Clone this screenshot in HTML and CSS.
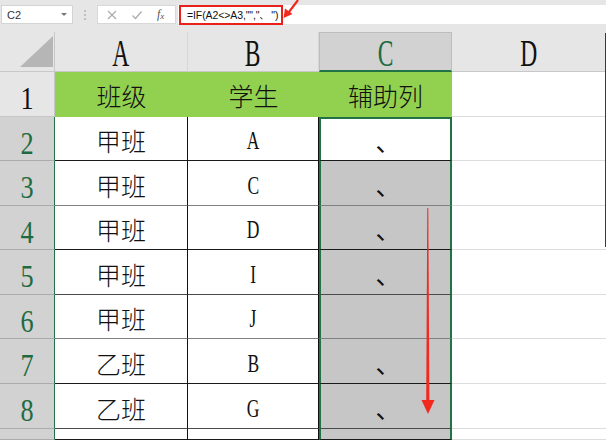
FILE: index.html
```html
<!DOCTYPE html>
<html>
<head>
<meta charset="utf-8">
<link rel="stylesheet" href="styles.css">
</head>
<body>
<div class="app">
  <div class="toolbar">
    <div class="namebox"><span>C2</span><span class="caret"></span></div>
    <div class="grip"><i></i><i></i><i></i></div>
    <div class="fxbox">
      <svg class="ico" width="12" height="12" viewBox="0 0 12 12"><path d="M2 2 L10 10 M10 2 L2 10" stroke="#ababab" stroke-width="1.2" fill="none"/></svg>
      <svg class="ico" width="12" height="12" viewBox="0 0 12 12"><path d="M1.5 6.5 L4.5 9.5 L10.5 2.5" stroke="#ababab" stroke-width="1.2" fill="none"/></svg>
      <span class="fx"><i>f</i><span class="sub">x</span></span>
    </div>
    <div class="formula"><span class="ftext">=IF(A2&lt;&gt;A3,"","<span class="dun">、</span>")</span></div>
  </div>
  <div class="sheet">
    <div class="row">
      <div class="corner"><div class="tri"></div></div>
      <div class="ch"><span>A</span></div>
      <div class="ch"><span>B</span></div>
      <div class="ch active"><span>C</span></div>
      <div class="ch last"><span>D</span></div>
    </div>
    <div class="row">
      <div class="rh"><span>1</span></div>
      <div class="head">班级</div>
      <div class="head">学生</div>
      <div class="head">辅助列</div>
      <div class="dc"></div>
    </div>
    <div class="row">
      <div class="rh sel"><span>2</span></div>
      <div class="cell">甲班</div>
      <div class="cell lat"><span>A</span></div>
      <div class="cc first">、</div>
      <div class="dc"></div>
    </div>
    <div class="row gray">
      <div class="rh sel"><span>3</span></div>
      <div class="cell">甲班</div>
      <div class="cell lat"><span>C</span></div>
      <div class="cc">、</div>
      <div class="dc"></div>
    </div>
    <div class="row">
      <div class="rh sel"><span>4</span></div>
      <div class="cell">甲班</div>
      <div class="cell lat"><span>D</span></div>
      <div class="cc">、</div>
      <div class="dc"></div>
    </div>
    <div class="row dark">
      <div class="rh sel"><span>5</span></div>
      <div class="cell">甲班</div>
      <div class="cell lat"><span>I</span></div>
      <div class="cc">、</div>
      <div class="dc"></div>
    </div>
    <div class="row gray">
      <div class="rh sel"><span>6</span></div>
      <div class="cell">甲班</div>
      <div class="cell lat"><span>J</span></div>
      <div class="cc"></div>
      <div class="dc"></div>
    </div>
    <div class="row">
      <div class="rh sel"><span>7</span></div>
      <div class="cell">乙班</div>
      <div class="cell lat"><span>B</span></div>
      <div class="cc">、</div>
      <div class="dc"></div>
    </div>
    <div class="row dark">
      <div class="rh sel"><span>8</span></div>
      <div class="cell">乙班</div>
      <div class="cell lat"><span>G</span></div>
      <div class="cc">、</div>
      <div class="dc"></div>
    </div>
    <div class="row">
      <div class="rh sel"></div>
      <div class="cell"></div>
      <div class="cell"></div>
      <div class="cc"></div>
      <div class="dc"></div>
    </div>
  </div>
  <div class="edge"></div>
  <svg class="arrows" width="606" height="440" viewBox="0 0 606 440">
    <polygon points="427.3,208 428.3,208 429.4,402 426.2,402" fill="#f2291f"/>
    <polygon points="421.5,400 434.5,400 428,414" fill="#f2291f"/>
    <line x1="298" y1="0" x2="289" y2="12" stroke="#f2291f" stroke-width="2.2"/>
    <polygon points="283.5,18 285,8.5 292.5,14" fill="#f2291f"/>
  </svg>
</div>
</body>
</html>
```

FILE: styles.css
```css
body {
  margin: 0;
  background: #e6e6e6;
}

.app {
  position: relative;
  width: 606px;
  height: 440px;
  overflow: hidden;
  background: #e6e6e6;
  font-family: "Liberation Sans", Arial, sans-serif;
}

/* ---------- toolbar ---------- */
.toolbar {
  height: 32px;
  box-sizing: border-box;
  padding-top: 5px;
  display: flex;
  align-items: flex-start;
}

.namebox {
  margin-left: 1px;
  width: 72px;
  height: 19px;
  box-sizing: border-box;
  background: #fff;
  border: 1px solid #d4d4d4;
  display: flex;
  align-items: center;
  padding: 0 5px 0 5px;
  font-size: 11px;
  color: #333;
}

.caret {
  margin-left: auto;
  width: 0;
  height: 0;
  border-left: 3px solid transparent;
  border-right: 3px solid transparent;
  border-top: 3px solid #777;
}

.grip {
  width: 24px;
  height: 19px;
  box-sizing: border-box;
  padding-top: 5px;
  display: flex;
  flex-direction: column;
  align-items: center;
  gap: 2px;
}

.grip i {
  display: block;
  width: 2px;
  height: 2px;
  background: #c0c0c0;
}

.fxbox {
  width: 79px;
  height: 19px;
  box-sizing: border-box;
  background: #fff;
  border: 1px solid #d8d8d8;
  display: flex;
  align-items: center;
  padding-left: 8px;
  gap: 13px;
}

.fx {
  font-family: "Liberation Serif", serif;
  font-size: 12px;
  color: #555;
  margin-left: 1px;
}

.fx i {
  font-style: italic;
}

.fx .sub {
  font-style: italic;
  font-size: 9px;
  position: relative;
  top: 1px;
}

.formula {
  margin-left: 2px;
  flex: 1;
  height: 19px;
  background: #fff;
}

.ftext {
  display: inline-block;
  box-sizing: border-box;
  margin-left: 1px;
  width: 104px;
  height: 20px;
  border: 2px solid #e8221b;
  padding-left: 6px;
  font-size: 10.5px;
  line-height: 16px;
  color: #111;
  white-space: nowrap;
  font-family: "Liberation Sans", "Noto Sans CJK SC", sans-serif;
  letter-spacing: -0.1px;
}

.dun {
  font-size: 9px;
  margin-right: 3px;
}

/* ---------- sheet ---------- */
.sheet {
  display: grid;
  grid-template-columns: 55px 133px 131px 133px 154px;
  grid-template-rows: 40px 45px 44px 45px 44px 45px 44px 45px 45px 11px;
  --line: #1a1a1a;
}

.row {
  display: contents;
}

.row.gray {
  --line: #808080;
}

.row.dark {
  --line: #4a4a4a;
}

.sheet > .row > div {
  box-sizing: border-box;
  display: flex;
  align-items: center;
  justify-content: center;
  min-width: 0;
  min-height: 0;
}

.corner {
  background: #e6e6e6;
  border-right: 1px solid #c8c8c8;
  border-bottom: 1px solid #c8c8c8;
  align-items: flex-end !important;
  justify-content: flex-end !important;
  padding: 0 1px 4px 0;
}

.tri {
  width: 33px;
  height: 31px;
  background: #b6b6b6;
  clip-path: polygon(100% 0, 100% 100%, 0 100%);
}

.ch {
  background: #e6e6e6;
  border-right: 1px solid #d6d6d6;
  border-bottom: 1px solid #c8c8c8;
  font-family: "Liberation Serif", serif;
  font-size: 38px;
  line-height: 36px;
  color: #111;
}

.ch span,
.rh span,
.lat span {
  display: inline-block;
}

.ch span {
  transform: scaleX(0.62);
  line-height: 36px;
  padding-top: 2px;
}

.ch.active {
  background: #d2d2d2;
  border-top: 1px solid #bdbdbd;
  border-left: 1px solid #bdbdbd;
  border-right: 1px solid #bdbdbd;
  border-bottom: 2px solid #217346;
  color: #1e6b41;
}

.ch.last {
  border-right: none;
}

.rh {
  background: #e6e6e6;
  border-right: 1px solid #c8c8c8;
  border-bottom: 1px solid #c8c8c8;
  font-family: "Liberation Serif", serif;
  font-size: 32px;
  color: #111;
}

.rh span {
  transform: scaleX(0.82);
  line-height: 32px;
  padding-top: 8px;
}

.rh.sel {
  background: #d2d2d2;
  border-right: 1px solid #217346;
  border-bottom: 1px solid #ababab;
  color: #1e6b41;
}

.head {
  background: #92d050;
  font-family: "Noto Sans CJK SC", sans-serif;
  font-weight: 300;
  font-size: 25px;
  color: #111;
  padding-top: 1px;
}

.cell {
  background: #fff;
  border-right: 1px solid #111;
  border-bottom: 1px solid var(--line);
  font-family: "Noto Sans CJK SC", sans-serif;
  font-weight: 300;
  font-size: 25px;
  color: #111;
  padding-top: 3px;
}

.cell.lat {
  font-family: "Liberation Serif", serif;
  font-weight: 400;
  font-size: 25px;
}

.lat span {
  transform: scaleX(0.7);
  line-height: 26px;
  padding-top: 2px;
}

.cc {
  background: #c6c6c6;
  border-left: 2px solid #217346;
  border-right: 2px solid #217346;
  border-bottom: 1px solid var(--line);
  font-family: "Noto Sans CJK SC", sans-serif;
  font-size: 25px;
  color: #111;
  padding-top: 1px;
  padding-left: 5px;
}

.cc.first {
  background: #fff;
  border-top: 2px solid #217346;
}

.dc {
  background: #fff;
  border-bottom: 1px solid #dcdcdc;
}

/* overlays */
.edge {
  position: absolute;
  right: 0;
  top: 33px;
  width: 1px;
  height: 214px;
  background: #3a3a3a;
}

.arrows {
  position: absolute;
  left: 0;
  top: 0;
  pointer-events: none;
}
```
